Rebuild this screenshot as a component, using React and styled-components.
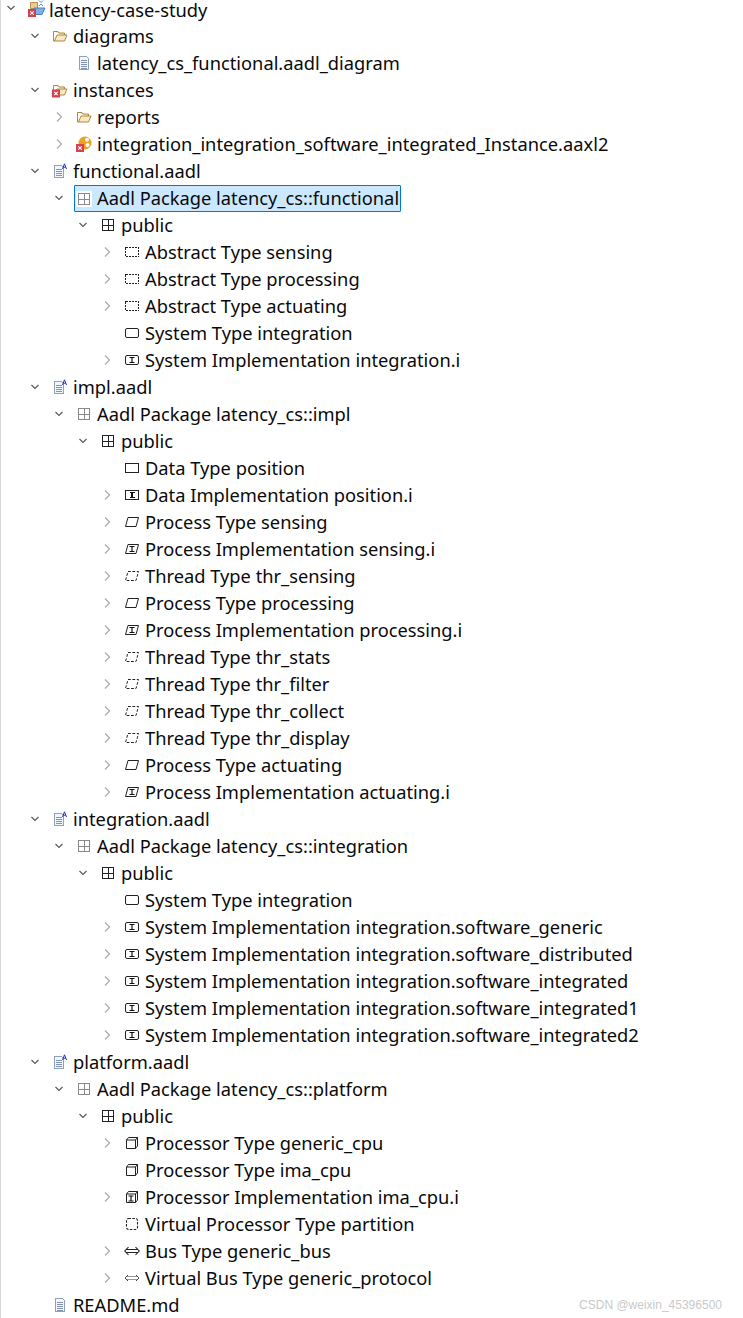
import React from 'react'
import styled, { createGlobalStyle } from 'styled-components'

const GlobalStyle = createGlobalStyle`
  html, body {
    margin: 0;
    padding: 0;
    background: #fff;
  }
`

const Page = styled.div`
  position: relative;
  width: 743px;
  height: 1318px;
  overflow: hidden;
  background: #fff;
  border-left: 1px solid #d8d8d8;
  box-sizing: border-box;
  font-family: "Noto Sans", "Open Sans", sans-serif;
`

const Tree = styled.ul`
  list-style: none;
  margin: 0;
  padding: 0;
`

const Row = styled.li`
  display: flex;
  align-items: center;
  height: 27px;
  line-height: 27px;
  padding-left: ${({ $depth }) => 3 + $depth * 24}px;

  /* the top row is scrolled partly out of the view */
  &:first-child {
    height: 22px;
    line-height: 20px;
    align-items: flex-start;
  }
`

const Twisty = styled.span`
  display: flex;
  align-items: center;
  justify-content: center;
  flex: none;
  width: 14px;
  height: 16px;
  margin-right: 10px;
`

const IconBox = styled.span`
  display: flex;
  flex: none;
  width: 16px;
  height: 16px;
  margin-right: 5px;
`

const Label = styled.span`
  font-size: 18.3px;
  color: #0a0a0a;
  white-space: nowrap;
`

const Selected = styled.span`
  display: flex;
  align-items: center;
  height: 27px;
  margin-left: -2px;
  padding: 0 1px;
  box-sizing: border-box;
  background: #cce8ff;
  border: 1px solid #0078d7;
  border-radius: 1px;
  transform: translateY(1px);
`

const SelectedLabel = styled(Label)`
  transform: translateY(-1px);
`

const SelectedIcon = styled(IconBox)`
  background: #fff;
`

const Watermark = styled.div`
  position: absolute;
  right: 21px;
  bottom: 6px;
  font-family: "Liberation Sans", sans-serif;
  font-size: 12px;
  color: #c9c9c9;
`

const Svg = ({ children }) => (
  <svg width="16" height="16" viewBox="0 0 16 16" fill="none" shapeRendering="crispEdges">
    {children}
  </svg>
)

const Soft = ({ children }) => (
  <svg width="16" height="16" viewBox="0 0 16 16" fill="none" overflow="visible">
    {children}
  </svg>
)

const Badge = ({ x = 0, y = 8 }) => (
  <g transform={`translate(${x} ${y})`}>
    <rect width="8" height="8" fill="#d9404f" />
    <path d="M2.300 2.300l3.400 3.400M5.700 2.300L2.300 5.700" stroke="#fff" strokeWidth="1.2" />
  </g>
)

const IBeam = ({ x = 8, y = 8 }) => (
  <path
    d={`M${x - 2.5} ${y - 2.5}h5M${x - 2.5} ${y + 2.5}h5M${x} ${y - 2.5}v5`}
    stroke="#111"
    strokeWidth="1.2"
  />
)

const icons = {
  project: (
    <Soft>
      <path d="M2.500 2.500h7v6h-7z" fill="#eccb8e" stroke="#b08840" strokeWidth=".9" />
      <path d="M6 8h11l-3 6.500H5z" fill="#7fb0e2" stroke="#3f78b5" strokeWidth=".9" />
      <path d="M11 .5l2 2 2-2M11 6l2-2 2 2" stroke="#4a7fb5" strokeWidth=".9" />
      <Badge x={0} y={9} />
    </Soft>
  ),
  folder: (
    <Soft>
      <path d="M1.500 3.500h4.500l1 1.500h5.500v2.500" fill="#f3dfb2" stroke="#b08840" />
      <path d="M1.500 3.500v9.500h11l2.500-6H5L2.500 13" fill="#f8e9c6" stroke="#b08840" />
    </Soft>
  ),
  errFolder: (
    <Soft>
      <path d="M1.500 3.500h4.500l1 1.500h5.500v2.500" fill="#f3dfb2" stroke="#b08840" />
      <path d="M1.500 3.500v9.500h11l2.500-6H5L2.500 13" fill="#f8e9c6" stroke="#b08840" />
      <Badge x={0} y={7.5} />
    </Soft>
  ),
  doc: (
    <Svg>
      <path d="M3.500 1.500h7l2 2v11h-9z" fill="#f3f6fb" stroke="#8fa0bd" />
      <path d="M5 5h6M5 7h6M5 9h6M5 11h6M5 13h6" stroke="#7f92b3" />
    </Svg>
  ),
  aadl: (
    <Svg>
      <path d="M2.500 2.500h7l2 2v10h-9z" fill="#f3f6fb" stroke="#8fa0bd" />
      <path d="M4 6h6M4 8h6M4 10h6M4 12h6" stroke="#7f92b3" />
      <path d="M10.500 6L12.500.8 14.500 6M11.300 4.200h2.400" stroke="#2233cc" strokeWidth="1" shapeRendering="auto" />
    </Svg>
  ),
  instance: (
    <Soft>
      <circle cx="9" cy="7" r="6.500" fill="#f0a01e" />
      <circle cx="11" cy="3.800" r="2" fill="#fff" />
      <circle cx="11.500" cy="9" r="2" fill="#fff" />
      <Badge x={0} y={8} />
    </Soft>
  ),
  packageGray: (
    <Svg>
      <path d="M2.500 2.500h11v11h-11zM8 2.500v11M2.500 8h11" stroke="#8a8a8a" />
    </Svg>
  ),
  packagePublic: (
    <Svg>
      <path d="M2.500 2.500h11v11h-11zM8 2.500v11M2.500 8h11" stroke="#222" />
    </Svg>
  ),
  abstract: (
    <Svg>
      <rect x="1.500" y="3.500" width="13" height="9" stroke="#222" strokeDasharray="2 1" />
    </Svg>
  ),
  system: (
    <Soft>
      <rect x="1.500" y="3.500" width="13" height="9" rx="1.500" stroke="#222" />
    </Soft>
  ),
  systemImpl: (
    <Soft>
      <rect x="1.500" y="3.500" width="13" height="9" rx="1.500" stroke="#222" />
      <IBeam />
    </Soft>
  ),
  data: (
    <Svg>
      <rect x="1.500" y="3.500" width="13" height="9" stroke="#222" />
    </Svg>
  ),
  dataImpl: (
    <Svg>
      <rect x="1.500" y="3.500" width="13" height="9" stroke="#222" />
      <IBeam />
    </Svg>
  ),
  process: (
    <Soft>
      <path d="M4 3.500h10.500L12 12.500H1.500z" stroke="#222" />
    </Soft>
  ),
  processImpl: (
    <Soft>
      <path d="M4 3.500h10.500L12 12.500H1.500z" stroke="#222" />
      <IBeam />
    </Soft>
  ),
  thread: (
    <Soft>
      <path d="M4 3.500h10.500L12 12.500H1.500z" stroke="#222" strokeDasharray="2.800 1.600" />
    </Soft>
  ),
  processor: (
    <Soft>
      <path d="M2.500 5h9v8.500h-9zM2.500 5l2-2.500h9v8.500l-2 2.500M11.500 5l2-2.500" stroke="#222" />
    </Soft>
  ),
  processorImpl: (
    <Soft>
      <path d="M2.500 5h9v8.500h-9zM2.500 5l2-2.500h9v8.500l-2 2.500M11.500 5l2-2.500" stroke="#222" />
      <IBeam x={7} y={9.5} />
    </Soft>
  ),
  virtualProcessor: (
    <Soft>
      <rect x="2.500" y="2.500" width="11" height="11" rx="2" stroke="#222" strokeWidth="1.100" strokeDasharray="2.500 1.300" />
    </Soft>
  ),
  bus: (
    <Soft>
      <path d="M4.500 4L.8 8l3.700 4M11.500 4l3.700 4-3.700 4M2 6.500h12M2 9.500h12" stroke="#222" strokeWidth="1.100" />
    </Soft>
  ),
  virtualBus: (
    <Soft>
      <path d="M4 5L1 8l3 3M12 5l3 3-3 3" stroke="#444" />
      <path d="M3.500 6.500h9M3.500 9.500h9" stroke="#333" strokeDasharray="1 1" />
    </Soft>
  ),
}

const Chevron = ({ state }) => {
  if (state === 'open') {
    return (
      <svg width="10" height="8" viewBox="0 0 10 8" fill="none">
        <path d="M1.500 2l3.500 3.500L8.500 2" stroke="#555" strokeWidth="1.100" />
      </svg>
    )
  }
  if (state === 'closed') {
    return (
      <svg width="8" height="12" viewBox="0 0 8 12" fill="none">
        <path d="M2 1.500L6.500 6 2 10.500" stroke="#aaa" strokeWidth="1.200" />
      </svg>
    )
  }
  return null
}

const rows = [
  [0, 'open', 'project', 'latency-case-study'],
  [1, 'open', 'folder', 'diagrams'],
  [2, '', 'doc', 'latency_cs_functional.aadl_diagram'],
  [1, 'open', 'errFolder', 'instances'],
  [2, 'closed', 'folder', 'reports'],
  [2, 'closed', 'instance', 'integration_integration_software_integrated_Instance.aaxl2'],
  [1, 'open', 'aadl', 'functional.aadl'],
  [2, 'open', 'packageGray', 'Aadl Package latency_cs::functional', true],
  [3, 'open', 'packagePublic', 'public'],
  [4, 'closed', 'abstract', 'Abstract Type sensing'],
  [4, 'closed', 'abstract', 'Abstract Type processing'],
  [4, 'closed', 'abstract', 'Abstract Type actuating'],
  [4, '', 'system', 'System Type integration'],
  [4, 'closed', 'systemImpl', 'System Implementation integration.i'],
  [1, 'open', 'aadl', 'impl.aadl'],
  [2, 'open', 'packageGray', 'Aadl Package latency_cs::impl'],
  [3, 'open', 'packagePublic', 'public'],
  [4, '', 'data', 'Data Type position'],
  [4, 'closed', 'dataImpl', 'Data Implementation position.i'],
  [4, 'closed', 'process', 'Process Type sensing'],
  [4, 'closed', 'processImpl', 'Process Implementation sensing.i'],
  [4, 'closed', 'thread', 'Thread Type thr_sensing'],
  [4, 'closed', 'process', 'Process Type processing'],
  [4, 'closed', 'processImpl', 'Process Implementation processing.i'],
  [4, 'closed', 'thread', 'Thread Type thr_stats'],
  [4, 'closed', 'thread', 'Thread Type thr_filter'],
  [4, 'closed', 'thread', 'Thread Type thr_collect'],
  [4, 'closed', 'thread', 'Thread Type thr_display'],
  [4, 'closed', 'process', 'Process Type actuating'],
  [4, 'closed', 'processImpl', 'Process Implementation actuating.i'],
  [1, 'open', 'aadl', 'integration.aadl'],
  [2, 'open', 'packageGray', 'Aadl Package latency_cs::integration'],
  [3, 'open', 'packagePublic', 'public'],
  [4, '', 'system', 'System Type integration'],
  [4, 'closed', 'systemImpl', 'System Implementation integration.software_generic'],
  [4, 'closed', 'systemImpl', 'System Implementation integration.software_distributed'],
  [4, 'closed', 'systemImpl', 'System Implementation integration.software_integrated'],
  [4, 'closed', 'systemImpl', 'System Implementation integration.software_integrated1'],
  [4, 'closed', 'systemImpl', 'System Implementation integration.software_integrated2'],
  [1, 'open', 'aadl', 'platform.aadl'],
  [2, 'open', 'packageGray', 'Aadl Package latency_cs::platform'],
  [3, 'open', 'packagePublic', 'public'],
  [4, 'closed', 'processor', 'Processor Type generic_cpu'],
  [4, '', 'processor', 'Processor Type ima_cpu'],
  [4, 'closed', 'processorImpl', 'Processor Implementation ima_cpu.i'],
  [4, '', 'virtualProcessor', 'Virtual Processor Type partition'],
  [4, 'closed', 'bus', 'Bus Type generic_bus'],
  [4, 'closed', 'virtualBus', 'Virtual Bus Type generic_protocol'],
  [1, '', 'doc', 'README.md'],
]

const App = () => (
  <Page>
    <GlobalStyle />
    <Tree>
      {rows.map(([depth, state, icon, text, selected], i) => (
        <Row key={i} $depth={depth}>
          <Twisty>
            <Chevron state={state} />
          </Twisty>
          {selected ? (
            <Selected>
              <SelectedIcon>{icons[icon]}</SelectedIcon>
              <SelectedLabel>{text}</SelectedLabel>
            </Selected>
          ) : (
            <>
              <IconBox>{icons[icon]}</IconBox>
              <Label>{text}</Label>
            </>
          )}
        </Row>
      ))}
    </Tree>
    <Watermark>CSDN @weixin_45396500</Watermark>
  </Page>
)

export default App
